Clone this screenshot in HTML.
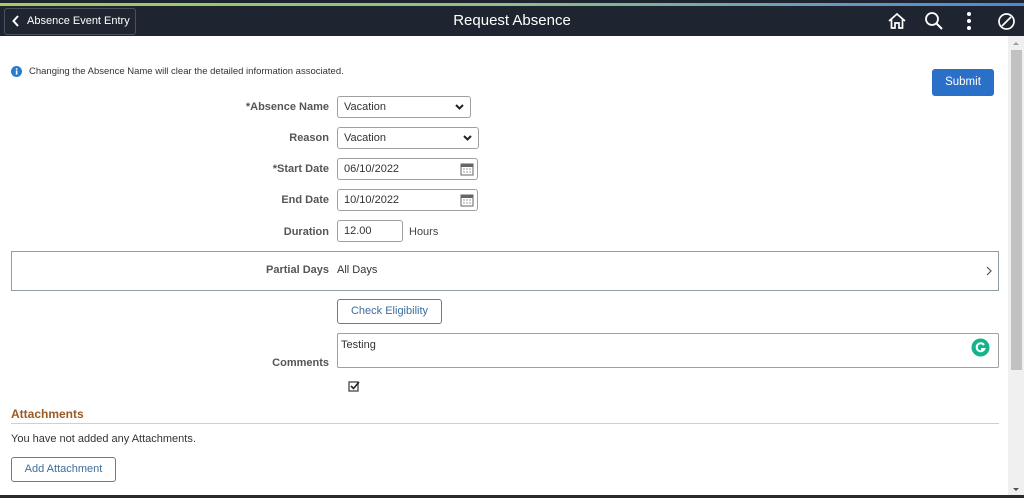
<!DOCTYPE html>
<html><head><meta charset="utf-8"><style>
*{box-sizing:border-box;margin:0;padding:0}
body{width:1024px;height:498px;overflow:hidden;background:#fff;font-family:"Liberation Sans",Arial,sans-serif;font-size:11px;color:#333;position:relative;white-space:nowrap}
.a{position:absolute}
.lbl{position:absolute;text-align:right;color:#555;font-size:11px;font-weight:bold;width:200px}
.inp{position:absolute;border:1px solid #a0a0a0;border-radius:3px;background:#fff;font-size:11px;color:#333;padding-left:6px;height:22px;line-height:20px}
.chev{position:absolute;right:6px;top:4px}
.btn{position:absolute;border:1px solid #5a7fa3;border-radius:3px;color:#3c6e9c;font-size:11px;text-align:center;background:#fff}
</style></head><body>
<div class="a" style="left:0;top:0;width:1024px;height:36px;background:#1e2530"></div>
<div class="a" style="left:0;top:3px;width:1024px;height:3px;background:linear-gradient(90deg,#a8cc5a,#8fbf8a 50%,#4f86d6)"></div>
<div class="a" style="left:4px;top:8px;width:132px;height:27px;border:1px solid #4a5260;border-radius:3px;background:#1f2631;color:#fff;font-size:11px;line-height:25px;padding-left:22px">Absence Event Entry</div>
<svg class="a" style="left:12px;top:15px" width="8" height="12"><path d="M6 1L1.5 6L6 11" stroke="#fff" stroke-width="2" fill="none"/></svg>
<div class="a" style="left:0;width:1024px;top:12px;text-align:center;color:#fff;font-size:15px">Request Absence</div>
<svg class="a" style="left:887px;top:11px" width="20" height="20"><path d="M2 10L10 3L18 10M4.5 8V17H8V12H12V17H15.5V8" stroke="#fff" stroke-width="1.7" fill="none"/></svg>
<svg class="a" style="left:924px;top:11px" width="20" height="20"><circle cx="8" cy="8" r="6" stroke="#fff" stroke-width="1.8" fill="none"/><path d="M12.5 12.5L18 18" stroke="#fff" stroke-width="2"/></svg>
<svg class="a" style="left:965px;top:11px" width="8" height="20"><circle cx="4" cy="3" r="2" fill="#fff"/><circle cx="4" cy="10" r="2" fill="#fff"/><circle cx="4" cy="17" r="2" fill="#fff"/></svg>
<svg class="a" style="left:997px;top:12px" width="19" height="19"><circle cx="9.5" cy="9.5" r="7.5" stroke="#fff" stroke-width="1.7" fill="none"/><path d="M5 14L14 5" stroke="#fff" stroke-width="1.7"/></svg>
<div class="a" style="left:1008px;top:36px;width:16px;height:460px;background:#f0f0f0"></div>
<div class="a" style="left:1011px;top:50px;width:11px;height:320px;background:#c1c1c1"></div>
<div class="a" style="left:1013px;top:42px;width:0;height:0;border:3px solid transparent;border-bottom-color:#a0a0a0;border-top:0"></div>
<div class="a" style="left:1013px;top:488px;width:0;height:0;border:3px solid transparent;border-top-color:#505050;border-bottom:0"></div>
<div class="a" style="left:0;top:495px;width:1024px;height:3px;background:#2a2a2a"></div>
<svg class="a" style="left:11px;top:66px" width="11" height="11"><circle cx="5.5" cy="5.5" r="5.5" fill="#2b7bcb"/><rect x="4.8" y="4.5" width="1.6" height="4" fill="#fff"/><circle cx="5.6" cy="3" r="0.9" fill="#fff"/></svg>
<div class="a" style="left:29px;top:66px;font-size:9.5px;color:#333">Changing the Absence Name will clear the detailed information associated.</div>
<div class="a" style="left:932px;top:69px;width:62px;height:27px;background:#2a70c9;border-radius:3px;color:#fff;text-align:center;line-height:27px;font-size:11.5px">Submit</div>
<div class="lbl" style="left:129px;top:101px">*Absence Name</div>
<div class="inp" style="left:337px;top:96px;width:134px">Vacation<svg class="chev" width="9" height="12"><path d="M1 4L4.5 7.5L8 4" stroke="#222" stroke-width="2" fill="none"/></svg></div>
<div class="lbl" style="left:129px;top:132px">Reason</div>
<div class="inp" style="left:337px;top:127px;width:142px">Vacation<svg class="chev" width="9" height="12"><path d="M1 4L4.5 7.5L8 4" stroke="#222" stroke-width="2" fill="none"/></svg></div>
<div class="lbl" style="left:129px;top:163px">*Start Date</div>
<div class="inp" style="left:337px;top:158px;width:141px">06/10/2022<svg class="chev" style="top:3px;right:3px" width="14" height="14"><rect x="1" y="2" width="12" height="11" fill="none" stroke="#666"/><rect x="1" y="2" width="12" height="3" fill="#666"/><path d="M3.5 7h1m2 0h1m2 0h1M3.5 10h1m2 0h1m2 0h1" stroke="#666" stroke-width="1.2"/></svg></div>
<div class="lbl" style="left:129px;top:194px">End Date</div>
<div class="inp" style="left:337px;top:189px;width:141px">10/10/2022<svg class="chev" style="top:3px;right:3px" width="14" height="14"><rect x="1" y="2" width="12" height="11" fill="none" stroke="#666"/><rect x="1" y="2" width="12" height="3" fill="#666"/><path d="M3.5 7h1m2 0h1m2 0h1M3.5 10h1m2 0h1m2 0h1" stroke="#666" stroke-width="1.2"/></svg></div>
<div class="lbl" style="left:129px;top:226px">Duration</div>
<div class="inp" style="left:337px;top:220px;width:66px">12.00</div>
<div class="a" style="left:409px;top:226px;color:#444">Hours</div>
<div class="a" style="left:11px;top:251px;width:988px;height:40px;border:1px solid #8ea0a4"></div>
<div class="lbl" style="left:129px;top:264px">Partial Days</div>
<div class="a" style="left:337px;top:264px;color:#333">All Days</div>
<svg class="a" style="left:986px;top:266px" width="6" height="10"><path d="M1 1L5 5L1 9" stroke="#555" stroke-width="1.2" fill="none"/></svg>
<div class="btn" style="left:337px;top:299px;width:105px;height:25px;line-height:23px">Check Eligibility</div>
<div class="a" style="left:337px;top:333px;width:662px;height:35px;border:1px solid #a0a0a0;border-radius:2px;padding:5px 3px;color:#333">Testing</div>
<svg class="a" style="left:971px;top:338px" width="19" height="19"><circle cx="9.5" cy="9.5" r="9" fill="#15b38a"/><path d="M13 7A4 4 0 1 0 13.3 11H10" stroke="#fff" stroke-width="2" fill="none"/></svg>
<div class="lbl" style="left:129px;top:357px">Comments</div>
<svg class="a" style="left:348px;top:380px" width="12" height="12"><rect x="1" y="2" width="9" height="9" fill="none" stroke="#444" stroke-width="1.3"/><path d="M3 6L5.5 8.5L11 2" stroke="#222" stroke-width="1.6" fill="none"/></svg>
<div class="a" style="left:11px;top:407px;color:#9a5a22;font-weight:bold;font-size:12px">Attachments</div>
<div class="a" style="left:11px;top:423px;width:988px;height:1px;background:#d0d0d0"></div>
<div class="a" style="left:11px;top:433px;color:#333">You have not added any Attachments.</div>
<div class="btn" style="left:11px;top:457px;width:105px;height:25px;line-height:23px">Add Attachment</div>
</body></html>
